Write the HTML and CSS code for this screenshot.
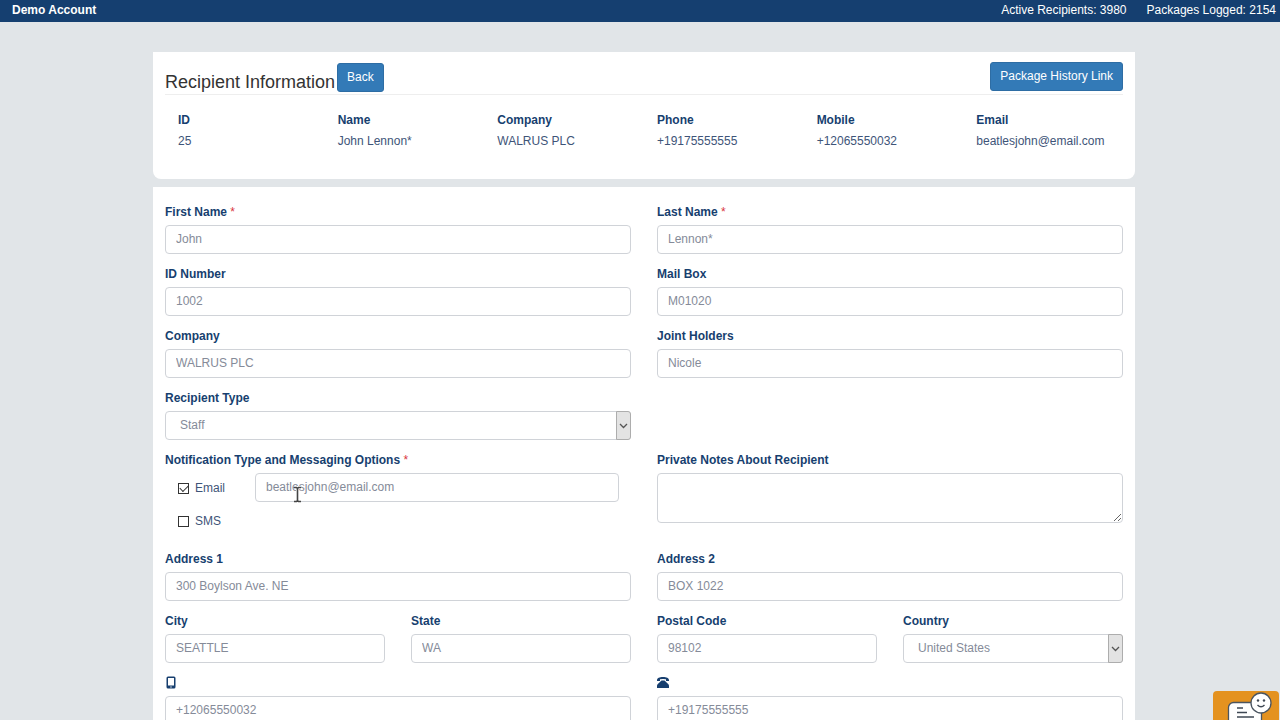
FILE: index.html
```
<!DOCTYPE html>
<html lang="en">
<head>
    <meta charset="UTF-8">
    <meta name="viewport" content="width=device-width, initial-scale=1.0">
    <title>Recipient Information</title>
    <link rel="stylesheet" href="styles.css">
</head>
<body>
    <!-- Top bar -->
    <header class="topbar">
        <strong>Demo Account</strong>
        <div class="stats">
            <span>Active Recipients: 3980</span>
            <span>Packages Logged: 2154</span>
        </div>
    </header>

    <main class="page">
        <!-- Recipient summary -->
        <section class="card summary">
            <div class="summary-header">
                <h1>Recipient Information</h1>
                <button type="button" class="btn btn-back">Back</button>
                <button type="button" class="btn btn-history">Package History Link</button>
            </div>
            <table class="summary-table">
                <thead>
                    <tr>
                        <th>ID</th>
                        <th>Name</th>
                        <th>Company</th>
                        <th>Phone</th>
                        <th>Mobile</th>
                        <th>Email</th>
                    </tr>
                </thead>
                <tbody>
                    <tr>
                        <td>25</td>
                        <td>John Lennon*</td>
                        <td>WALRUS PLC</td>
                        <td>+19175555555</td>
                        <td>+12065550032</td>
                        <td>beatlesjohn@email.com</td>
                    </tr>
                </tbody>
            </table>
        </section>

        <!-- Edit form -->
        <form class="card edit-form">
            <div class="row">
                <div class="field">
                    <label for="first-name">First Name <span class="required">*</span></label>
                    <input type="text" id="first-name" value="John">
                </div>
                <div class="field">
                    <label for="last-name">Last Name <span class="required">*</span></label>
                    <input type="text" id="last-name" value="Lennon*">
                </div>
            </div>

            <div class="row">
                <div class="field">
                    <label for="id-number">ID Number</label>
                    <input type="text" id="id-number" value="1002">
                </div>
                <div class="field">
                    <label for="mail-box">Mail Box</label>
                    <input type="text" id="mail-box" value="M01020">
                </div>
            </div>

            <div class="row">
                <div class="field">
                    <label for="company">Company</label>
                    <input type="text" id="company" value="WALRUS PLC">
                </div>
                <div class="field">
                    <label for="joint-holders">Joint Holders</label>
                    <input type="text" id="joint-holders" value="Nicole">
                </div>
            </div>

            <div class="row">
                <div class="field">
                    <label for="recipient-type">Recipient Type</label>
                    <div class="select">
                        <select id="recipient-type">
                            <option>Staff</option>
                        </select>
                        <span class="select-arrow">
                            <svg width="9" height="6" viewBox="0 0 9 6"><path d="M1 1l3.5 3.5L8 1" fill="none" stroke="#555" stroke-width="1.3"/></svg>
                        </span>
                    </div>
                </div>
            </div>

            <div class="row row-notify">
                <fieldset class="field">
                    <legend>Notification Type and Messaging Options <span class="required">*</span></legend>
                    <div class="notify">
                        <label class="check"><input type="checkbox" checked> Email</label>
                        <div class="notify-address">
                            <input type="text" id="notify-email" aria-label="Notification email" value="beatlesjohn@email.com">
                            <svg class="text-cursor" width="9" height="17" viewBox="0 0 9 17">
                                <path d="M1 1.5h2.5l1 1 1-1H8M4.5 2v13M1 15.5h2.5l1-1 1 1H8" fill="none" stroke="#fff" stroke-width="3"/>
                                <path d="M1 1.5h2.5l1 1 1-1H8M4.5 2v13M1 15.5h2.5l1-1 1 1H8" fill="none" stroke="#444" stroke-width="1.6"/>
                            </svg>
                        </div>
                    </div>
                    <div class="notify">
                        <label class="check"><input type="checkbox"> SMS</label>
                    </div>
                </fieldset>
                <div class="field">
                    <label for="notes">Private Notes About Recipient</label>
                    <textarea id="notes"></textarea>
                </div>
            </div>

            <div class="row">
                <div class="field">
                    <label for="address1">Address 1</label>
                    <input type="text" id="address1" value="300 Boylson Ave. NE">
                </div>
                <div class="field">
                    <label for="address2">Address 2</label>
                    <input type="text" id="address2" value="BOX 1022">
                </div>
            </div>

            <div class="row row-four">
                <div class="field">
                    <label for="city">City</label>
                    <input type="text" id="city" value="SEATTLE">
                </div>
                <div class="field">
                    <label for="state">State</label>
                    <input type="text" id="state" value="WA">
                </div>
                <div class="field">
                    <label for="postal-code">Postal Code</label>
                    <input type="text" id="postal-code" value="98102">
                </div>
                <div class="field">
                    <label for="country">Country</label>
                    <div class="select">
                        <select id="country">
                            <option>United States</option>
                        </select>
                        <span class="select-arrow">
                            <svg width="9" height="6" viewBox="0 0 9 6"><path d="M1 1l3.5 3.5L8 1" fill="none" stroke="#555" stroke-width="1.3"/></svg>
                        </span>
                    </div>
                </div>
            </div>

            <div class="row">
                <div class="field">
                    <label for="mobile" class="icon-label">
                        <svg width="12" height="13" viewBox="0 0 12 13" role="img" aria-label="Mobile">
                            <path fill-rule="evenodd" fill="#173f6f" d="M3 .5h6A1.500 1.500 0 0 1 10.500 2v9A1.500 1.500 0 0 1 9 12.500H3A1.500 1.500 0 0 1 1.500 11V2A1.500 1.500 0 0 1 3 .5zM3 2v7.500h6V2zM5.300 10.500v1h1.400v-1z"/>
                        </svg>
                    </label>
                    <input type="tel" id="mobile" value="+12065550032">
                </div>
                <div class="field">
                    <label for="phone" class="icon-label">
                        <svg width="12" height="13" viewBox="0 0 12 13" role="img" aria-label="Phone">
                            <path fill="#173f6f" d="M0 4.200C0 2 2.500 1 6 1s6 1 6 3.200V5H9V3.300Q6 2.700 3 3.300V5H0zM4.500 4.600h3L11.400 8.300Q12 9 12 10v2H0v-2q0-1 .6-1.700z"/>
                        </svg>
                    </label>
                    <input type="tel" id="phone" value="+19175555555">
                </div>
            </div>
        </form>
    </main>

    <!-- Feedback widget -->
    <button type="button" class="feedback" aria-label="Feedback">
        <svg width="66" height="40" viewBox="0 0 66 40">
            <rect x="15.500" y="11.500" width="33" height="32" rx="5" fill="#fff" stroke="#4b5560" stroke-width="1.300"/>
            <path d="M24 17h6M24 21.500h10M24 26h17" stroke="#3f4854" stroke-width="1.600" fill="none"/>
            <circle cx="48" cy="12" r="10" fill="#fff" stroke="#4b5560" stroke-width="1.300"/>
            <circle cx="45" cy="9.500" r="1.200" fill="#3f4854"/>
            <circle cx="51" cy="9.500" r="1.200" fill="#3f4854"/>
            <path d="M44.500 14Q48 17.500 51.500 14" stroke="#3f4854" stroke-width="1.400" fill="none"/>
        </svg>
    </button>
</body>
</html>
```
FILE: styles.css
```
* {
    box-sizing: border-box;
}

html {
    height: 100%;
    overflow: hidden;
}

body {
    margin: 0;
    background-color: #e1e5e8;
    color: #3e5478;
    font-family: "Liberation Sans", Arial, sans-serif;
    font-size: 12px;
    line-height: 17px;
}

.topbar {
    display: flex;
    justify-content: space-between;
    height: 22px;
    padding: 2px 4px 3px 12px;
    background-color: #153f70;
    color: #fff;
}

.stats {
    display: flex;
    gap: 20px;
}

.page {
    padding: 30px 145px 0 153px;
}

.card {
    padding: 0 12px;
    background-color: #fff;
}

.summary {
    padding-top: 10px;
    padding-bottom: 27px;
    margin-bottom: 8px;
    border-radius: 0 0 8px 8px;
}

.summary-header {
    display: flex;
    align-items: flex-start;
    gap: 2px;
    height: 33px;
    border-bottom: 1px solid #eee;
}

h1 {
    margin: 8px 0 0;
    color: #333;
    font-size: 18px;
    font-weight: normal;
    line-height: 24px;
}

.btn {
    height: 29px;
    padding: 0 9px;
    border: 1px solid #2e6da4;
    border-radius: 3px;
    background-color: #337ab7;
    color: #fff;
    font: inherit;
    cursor: pointer;
}

.btn-back {
    margin-top: 1px;
}

.btn-history {
    margin-left: auto;
}

.summary-table {
    width: 100%;
    margin-top: 15px;
    border-collapse: collapse;
    table-layout: fixed;
}

.summary-table th,
.summary-table td {
    padding: 2px 0 2px 13px;
    text-align: left;
}

.summary-table th,
.field > label,
legend {
    color: #173f6f;
    font-weight: bold;
}

.edit-form {
    padding-top: 17px;
    padding-bottom: 12px;
}

.row {
    display: grid;
    grid-template-columns: 1fr 1fr;
    gap: 26px;
    margin-bottom: 12px;
}

.row-four {
    grid-template-columns: repeat(4, 1fr);
}

.row-notify {
    margin-bottom: 16px;
}

.field {
    min-width: 0;
    margin: 0;
    padding: 0;
    border: 0;
}

.field > label,
legend {
    display: block;
    height: 17px;
    margin-bottom: 4px;
    padding: 0;
}

.required {
    color: #d9363e;
    font-weight: normal;
}

input[type="text"],
input[type="tel"],
select,
textarea {
    display: block;
    width: 100%;
    height: 29px;
    padding: 0 10px 2px;
    border: 1px solid #d0d3d8;
    border-radius: 4px;
    background-color: #fff;
    color: #858b99;
    font: inherit;
}

textarea {
    height: 50px;
    resize: vertical;
}

.select {
    position: relative;
}

select {
    appearance: none;
    padding: 0 14px;
}

.select-arrow {
    position: absolute;
    top: 0;
    right: 0;
    bottom: 0;
    display: flex;
    align-items: center;
    justify-content: center;
    width: 15px;
    border: 1px solid #adadad;
    border-radius: 0 3px 3px 0;
    background-color: #e3e3e3;
    pointer-events: none;
}

.notify {
    display: flex;
    align-items: center;
    height: 29px;
    margin-bottom: 4px;
    padding: 0 12px 0 13px;
}

.notify:last-child {
    margin-bottom: 0;
}

.check {
    display: flex;
    align-items: center;
    gap: 6px;
    width: 77px;
    padding-top: 2px;
}

input[type="checkbox"] {
    appearance: none;
    width: 11px;
    height: 11px;
    margin: 0;
    border: 1px solid #333;
    background-color: #fff;
}

input[type="checkbox"]:checked::before {
    content: "";
    display: block;
    width: 7px;
    height: 4px;
    margin: 1px;
    border-bottom: 1px solid #333;
    border-left: 1px solid #333;
    transform: rotate(-45deg);
}

.notify-address {
    position: relative;
    flex: 1;
}

.text-cursor {
    position: absolute;
    top: 13px;
    left: 38px;
    pointer-events: none;
}

.icon-label svg {
    display: block;
}

.field > .icon-label {
    padding-top: 1px;
}

.feedback {
    position: fixed;
    right: 1px;
    bottom: -11px;
    width: 66px;
    height: 40px;
    padding: 0;
    border: 0;
    border-radius: 4px 4px 0 0;
    background-color: #e4921f;
    overflow: hidden;
    cursor: pointer;
}

.feedback svg {
    display: block;
}
```
